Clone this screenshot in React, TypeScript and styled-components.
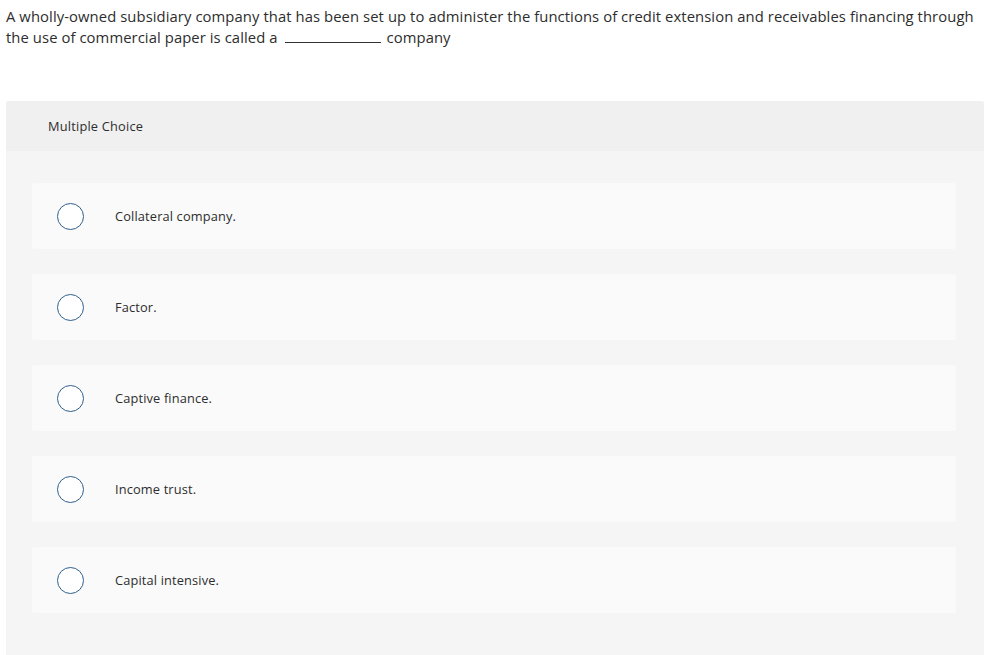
import React from "react";
import styled, { createGlobalStyle } from "styled-components";

const Global = createGlobalStyle`
  html, body { margin: 0; padding: 0; background: #fff; }
  body { font-family: "Open Sans", "Liberation Sans", sans-serif; color: #333; }
`;

const Page = styled.div`
  padding: 6px 6px 0 6px;
  width: 978px;
`;

const Question = styled.p`
  margin: 0;
  font-size: 14.8px;
  line-height: 21px;
  color: #2d2d2d;
  letter-spacing: 0.085px;
  white-space: nowrap;
`;

const Blank = styled.span`
  display: inline-block;
  width: 96px;
  border-bottom: 1px solid #333;
  margin: 0 6px 0 7px;
  height: 15px;
`;

const Panel = styled.section`
  margin-top: 53px;
  background: #f5f5f5;
  border-radius: 3px 3px 0 0;
  height: 560px;
`;

const Header = styled.div`
  height: 50px;
  background: #f0f0f0;
  border-radius: 3px 3px 0 0;
  display: flex;
  align-items: center;
  padding-left: 42px;
  font-size: 12.8px;
  letter-spacing: 0.2px;
  color: #2d2d2d;
`;

const Choices = styled.div`
  display: flex;
  flex-direction: column;
  gap: 25px;
  padding: 32px 28px 0 26px;
`;

const Choice = styled.label`
  display: flex;
  align-items: center;
  height: 66px;
  background: #fafafa;
  border-radius: 3px;
  padding-left: 25px;
  cursor: pointer;
`;

const Radio = styled.span`
  width: 25px;
  height: 25px;
  border: 1.5px solid #2f5f8c;
  border-radius: 50%;
  background: #fff;
  flex-shrink: 0;
`;

const Label = styled.span`
  margin-left: 31px;
  font-size: 12.8px;
  letter-spacing: 0.15px;
  color: #2d2d2d;
`;

const options = [
  "Collateral company.",
  "Factor.",
  "Captive finance.",
  "Income trust.",
  "Capital intensive.",
];

export default function App() {
  return (
    <>
      <Global />
      <Page>
        <Question>
          A wholly-owned subsidiary company that has been set up to administer the functions of credit
          extension and receivables financing through
          <br />
          the use of commercial paper is called a<Blank />company
        </Question>
        <Panel>
          <Header>Multiple Choice</Header>
          <Choices>
            {options.map((o) => (
              <Choice key={o}>
                <Radio />
                <Label>{o}</Label>
              </Choice>
            ))}
          </Choices>
        </Panel>
      </Page>
    </>
  );
}
